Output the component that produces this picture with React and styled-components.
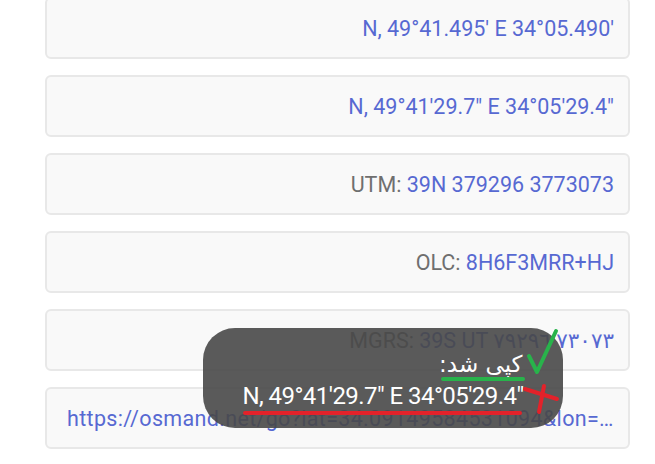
import React from "react";
import styled, { createGlobalStyle } from "styled-components";

const Global = createGlobalStyle`
  html, body { margin: 0; padding: 0; background: #ffffff; }
  body { font-family: Roboto, "Noto Sans", "DejaVu Sans", sans-serif; overflow: hidden; }
`;

const Page = styled.div`
  position: relative;
  width: 655px;
  height: 464px;
  overflow: hidden;
  background: #ffffff;
`;

const List = styled.div`
  display: flex;
  flex-direction: column;
  gap: 16px;
  padding: 0 25px 0 45px;
  margin-top: -3px;
`;

const Card = styled.div`
  box-sizing: border-box;
  height: 62px;
  border: 2px solid #e8e8e8;
  border-radius: 6px;
  background: #f9f9f9;
  display: flex;
  align-items: center;
  justify-content: ${(p) => (p.$left ? "flex-start" : "flex-end")};
  padding: ${(p) => (p.$left ? "0 14px 0 20px" : "0 14px")};
  font-size: 21.5px;
  color: #5769d2;
  white-space: nowrap;
  overflow: hidden;
`;

const Label = styled.span`
  color: #6f6f6f;
`;

const Value = styled.span`
  color: #5769d2;
`;

const Group = styled.span`
  unicode-bidi: isolate;
`;

const Link = styled.span`
  display: block;
  overflow: hidden;
  white-space: nowrap;
  color: #5769d2;
  letter-spacing: 0.33px;
`;

const Toast = styled.div`
  position: absolute;
  left: 203px;
  top: 328px;
  width: 360px;
  height: 100px;
  box-sizing: border-box;
  border-radius: 32px;
  background: rgba(72, 72, 72, 0.9);
  display: flex;
  flex-direction: column;
  align-items: center;
  justify-content: center;
  color: #ffffff;
  padding-top: 4px;
`;

const ToastBlock = styled.div`
  display: flex;
  flex-direction: column;
  align-items: flex-end;
`;

const ToastLine = styled.div`
  font-size: ${(p) => p.$size}px;
  line-height: ${(p) => p.$lh}px;
  white-space: nowrap;
  font-family: ${(p) => (p.$fa ? '"DejaVu Sans", sans-serif' : 'Roboto, sans-serif')};
  letter-spacing: ${(p) => p.$ls || 0}px;
  margin-right: ${(p) => p.$mr || 0}px;
`;

const Marks = styled.svg`
  position: absolute;
  left: 0;
  top: 0;
  pointer-events: none;
`;

export default function App() {
  return (
    <Page>
      <Global />
      <List>
        <Card>N, 49°41.495' E 34°05.490'</Card>
        <Card>N, 49°41'29.7" E 34°05'29.4"</Card>
        <Card>
          <Label>UTM:&nbsp;</Label>
          <Value>39N 379296 3773073</Value>
        </Card>
        <Card>
          <Label>OLC:&nbsp;</Label>
          <Value>8H6F3MRR+HJ</Value>
        </Card>
        <Card>
          <Label>MGRS:&nbsp;</Label>
          <Value>
            39S UT <Group>٧٩٢٩٦</Group> <Group>٧٣٠٧٣</Group>
          </Value>
        </Card>
        <Card $left>
          <Link>https://osmand.net/go?lat=34.09149584531094&amp;lon=…</Link>
        </Card>
      </List>
      <Toast>
        <ToastBlock>
          <ToastLine $fa $size={23} $lh={32} $mr={1} dir="rtl">کپی شد:</ToastLine>
          <ToastLine $size={24} $lh={32} $ls={-0.55}>N, 49°41'29.7" E 34°05'29.4"</ToastLine>
        </ToastBlock>
      </Toast>
      <Marks width="655" height="464" viewBox="0 0 655 464">
        <line x1="443" y1="379" x2="523" y2="379" stroke="#28b34b" strokeWidth="4" strokeLinecap="round" />
        <path d="M529 356 L537 372 L556 331" fill="none" stroke="#28b34b" strokeWidth="4" strokeLinecap="round" strokeLinejoin="round" />
        <line x1="245" y1="413" x2="520" y2="413" stroke="#e3222a" strokeWidth="4" strokeLinecap="round" />
        <line x1="525" y1="389" x2="557" y2="399" stroke="#e3222a" strokeWidth="4" strokeLinecap="round" />
        <line x1="544" y1="386" x2="539" y2="412" stroke="#e3222a" strokeWidth="4" strokeLinecap="round" />
      </Marks>
    </Page>
  );
}
